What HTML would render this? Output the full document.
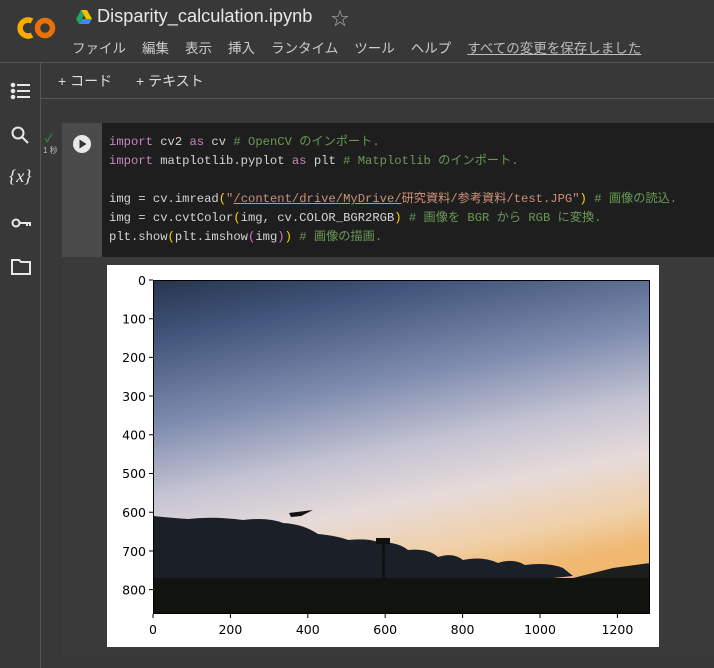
<!DOCTYPE html>
<html><head><meta charset="utf-8"><style>
*{margin:0;padding:0;box-sizing:border-box}
body{width:714px;height:668px;background:#383838;position:relative;overflow:hidden;font-family:"Liberation Sans","Noto Sans CJK JP",sans-serif;color:#e3e3e3}
.abs{position:absolute}
.menu{top:37px;left:72px;font-size:13.5px;color:#ccc;white-space:nowrap}
.menu span{margin-right:16px}
.code{left:109px;top:133px;font-family:"Liberation Mono","Noto Sans CJK JP",monospace;font-size:12.2px;line-height:19px;color:#d4d4d4;white-space:pre}
.k{color:#c586c0}.c{color:#6a9955}.s{color:#ce9178}.y{color:#ffd700}.p{color:#da70d6}
</style></head><body>
<svg class="abs" style="left:14px;top:15px" width="44" height="26" viewBox="0 0 44 26">
<path d="M18 6 A8 8 0 1 0 18 20" fill="none" stroke="#f9ab00" stroke-width="5.5"/>
<circle cx="31" cy="13" r="7.5" fill="none" stroke="#e8710a" stroke-width="5.5"/>
</svg>
<svg class="abs" style="left:76px;top:10px" width="16" height="14" viewBox="0 0 16 14"><path d="M5 0h6l5 9h-6z" fill="#fbbc04"/><path d="M5 0l-5 9 3 5 5-9z" fill="#1fa463"/><path d="M3 14h10l3-5H6z" fill="#4285f4"/></svg>
<div class="abs" style="left:97px;top:6px;font-size:18.2px;color:#e8e8e8">Disparity_calculation.ipynb</div>
<div class="abs" style="left:331px;top:5px;font-size:18px;color:#aaa">☆</div>
<div class="abs menu"><span>ファイル</span><span>編集</span><span>表示</span><span>挿入</span><span>ランタイム</span><span>ツール</span><span>ヘルプ</span><span style="text-decoration:underline;color:#bbb">すべての変更を保存しました</span></div>
<div class="abs" style="left:0;top:62px;width:714px;height:1px;background:#555"></div>
<div class="abs" style="left:40px;top:62px;width:1px;height:606px;background:#555"></div>
<div class="abs" style="left:40px;top:98px;width:674px;height:1px;background:#555"></div>
<div class="abs" style="left:58px;top:71px;font-size:14px;color:#ddd;white-space:nowrap">+ コード</div>
<div class="abs" style="left:136px;top:71px;font-size:14px;color:#ddd;white-space:nowrap">+ テキスト</div>
<svg class="abs" style="left:10px;top:80px" width="22" height="210" viewBox="0 0 22 210" fill="none" stroke="#e8e8e8" stroke-width="2">
<circle cx="3" cy="5" r="1.3" fill="#e8e8e8"/><circle cx="3" cy="11" r="1.3" fill="#e8e8e8"/><circle cx="3" cy="17" r="1.3" fill="#e8e8e8"/>
<path d="M7 5h13M7 11h13M7 17h13"/>
<circle cx="8" cy="53" r="5.5"/><path d="M12 57l6 6"/>
<circle cx="6" cy="143" r="3.5"/><path d="M10 143h10v3M17 143v3"/>
<path d="M2 180h7l2 2h9v12H2z"/>
</svg>
<div class="abs" style="left:9px;top:166px;font-family:'Liberation Serif',serif;font-style:italic;font-size:18px;color:#e8e8e8">{x}</div>
<div class="abs" style="left:45px;top:130px;color:#2ea44f;font-size:11px">✓</div>
<div class="abs" style="left:43px;top:145px;font-size:8px;color:#bbb">1 秒</div>
<div class="abs" style="left:62px;top:123px;width:40px;height:134px;background:#4a4a4a"></div>
<div class="abs" style="left:62px;top:257px;width:652px;height:400px;background:#3a3a3a"></div>
<div class="abs" style="left:102px;top:123px;width:612px;height:134px;background:#1e1e1e"></div>
<svg class="abs" style="left:72px;top:134px" width="20" height="20"><circle cx="10" cy="10" r="9" fill="#e8e8e8"/><path d="M7.5 5.5v9l7-4.5z" fill="#333"/></svg>
<div class="abs code"><span class="k">import</span> cv2 <span class="k">as</span> cv <span class="c"># OpenCV のインポート.</span>
<span class="k">import</span> matplotlib.pyplot <span class="k">as</span> plt <span class="c"># Matplotlib のインポート.</span>

img = cv.imread<span class="y">(</span><span class="s">"<u>/content/drive/MyDrive/</u>研究資料/参考資料/test.JPG"</span><span class="y">)</span> <span class="c"># 画像の読込.</span>
img = cv.cvtColor<span class="y">(</span>img, cv.COLOR_BGR2RGB<span class="y">)</span> <span class="c"># 画像を BGR から RGB に変換.</span>
plt.show<span class="y">(</span>plt.imshow<span class="p">(</span>img<span class="p">)</span><span class="y">)</span> <span class="c"># 画像の描画.</span></div>
<svg class="abs" style="left:107px;top:265px" width="552" height="382" viewBox="0 0 552 382" font-family="DejaVu Sans, Liberation Sans, sans-serif" font-size="12.5" fill="#000">
<defs>
<linearGradient id="sky" x1="0" y1="0" x2="0.3" y2="1">
<stop offset="0" stop-color="#27344d"/><stop offset="0.15" stop-color="#3f5277"/><stop offset="0.4" stop-color="#7d8bae"/><stop offset="0.6" stop-color="#c5c4d3"/><stop offset="0.75" stop-color="#e6dbd9"/><stop offset="0.9" stop-color="#f0d0a8"/><stop offset="1" stop-color="#f0b870"/>
</linearGradient>
</defs>
<rect width="552" height="382" fill="#fff"/>
<g transform="translate(46,15)">
<rect width="497" height="334" fill="url(#sky)"/>
<path d="M0 236 Q20 238 35 239 Q60 236 90 240 Q115 237 130 243 Q150 244 165 254 Q185 256 195 260 Q215 258 225 262 Q245 262 255 270 Q275 268 285 277 Q300 272 310 280 Q330 276 345 283 Q360 278 372 285 Q395 282 410 288 L420 296 L380 300 L0 300Z" fill="#1a1f28"/>
<path d="M0 270 L260 275 L260 300 L0 300Z" fill="#1a1f28" opacity="0.6"/>
<path d="M420 298 L460 288 L497 283 L497 310 L400 310Z" fill="#1c1e1c"/>
<path d="M0 298 L497 298 L497 334 L0 334Z" fill="#11130f"/>
<path d="M136 233 L160 230 L148 236 L138 237Z" fill="#111"/>
<rect x="229" y="262" width="3" height="60" fill="#111"/><rect x="223" y="258" width="14" height="6" fill="#111"/>
<rect x="0.5" y="0.5" width="496" height="333" fill="none" stroke="#000"/>
</g>
<g stroke="#000">
<path d="M42 15h4M42 53.7h4M42 92.4h4M42 131h4M42 169.8h4M42 208.5h4M42 247.2h4M42 286h4M42 324.6h4"/>
<path d="M46 349v4M123.4 349v4M200.8 349v4M278.2 349v4M355.6 349v4M433 349v4M510.4 349v4"/>
</g>
<g text-anchor="end">
<text x="39" y="20">0</text><text x="39" y="58.5">100</text><text x="39" y="97">200</text><text x="39" y="136">300</text><text x="39" y="174.5">400</text><text x="39" y="213">500</text><text x="39" y="252">600</text><text x="39" y="291">700</text><text x="39" y="329.5">800</text>
</g>
<g text-anchor="middle">
<text x="46" y="369">0</text><text x="123.4" y="369">200</text><text x="200.8" y="369">400</text><text x="278.2" y="369">600</text><text x="355.6" y="369">800</text><text x="433" y="369">1000</text><text x="510.4" y="369">1200</text>
</g>
</svg>
</body></html>
